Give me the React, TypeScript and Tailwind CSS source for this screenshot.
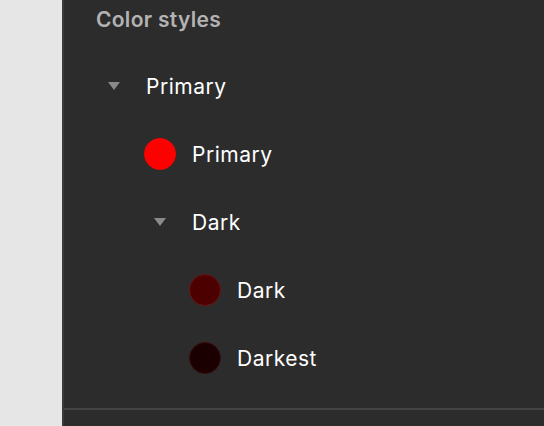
import { ReactNode } from 'react'

type Row = {
  level: number
  label: string
  kind: 'group' | 'color'
  color?: string
  ring?: string
}

const rows: Row[] = [
  { level: 0, label: 'Primary', kind: 'group' },
  { level: 1, label: 'Primary', kind: 'color', color: '#ff0000', ring: '#ff0000' },
  { level: 1, label: 'Dark', kind: 'group' },
  { level: 2, label: 'Dark', kind: 'color', color: '#4d0000', ring: '#6a1414' },
  { level: 2, label: 'Darkest', kind: 'color', color: '#1a0000', ring: '#3a0c0c' },
]

const indents = ['pl-[34px]', 'pl-[80px]', 'pl-[125px]']

function Caret() {
  return (
    <svg width="12" height="8" viewBox="0 0 12 8">
      <path d="M0 0 H12 L6 8 Z" fill="#8a8a8a" />
    </svg>
  )
}

function Slot({ children }: { children: ReactNode }) {
  return <div className="w-8 h-8 flex items-center justify-center shrink-0">{children}</div>
}

export default function App() {
  return (
    <div className="flex h-screen w-full" style={{ fontFamily: 'Inter, "Noto Sans", sans-serif' }}>
      <div className="w-[62px] shrink-0 bg-[#e6e6e6]" />
      <div className="flex-1 bg-[#2c2c2c] border-l-2 border-[#3a3a3a] flex flex-col">
        <div className="h-10 flex items-center pl-8 text-[21px] tracking-[0.3px] font-semibold text-[#b3b3b3]">
          Color styles
        </div>
        <div className="mt-3 pb-4 border-b-2 border-[#444444]">
          {rows.map((r, i) => (
            <div key={i} className={`h-[68px] flex items-center gap-4 ${indents[r.level]}`}>
              <Slot>
                {r.kind === 'group' ? (
                  <Caret />
                ) : (
                  <div
                    className="w-8 h-8 rounded-full border"
                    style={{ backgroundColor: r.color, borderColor: r.ring }}
                  />
                )}
              </Slot>
              <span className="text-[21px] tracking-[0.5px] text-white pt-px">{r.label}</span>
            </div>
          ))}
        </div>
      </div>
    </div>
  )
}
